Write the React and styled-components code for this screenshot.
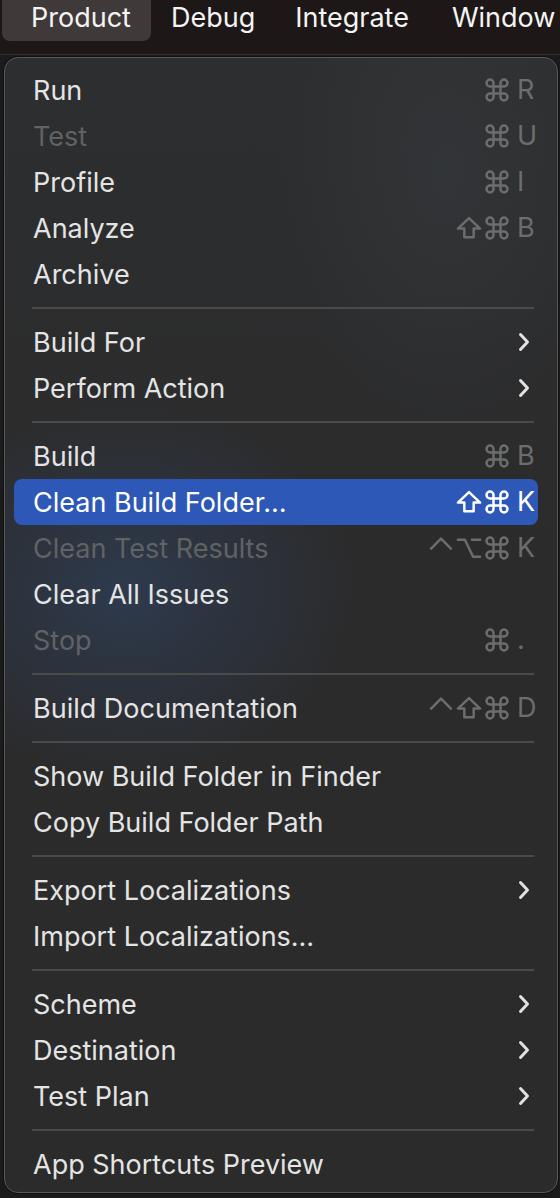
import React from 'react';
import styled, { createGlobalStyle } from 'styled-components';

const GlobalStyle = createGlobalStyle`
  html, body {
    margin: 0;
    padding: 0;
    background: #1b1b1c;
  }
  body {
    font-family: "Inter", "Noto Sans", "Liberation Sans", sans-serif;
    -webkit-font-smoothing: antialiased;
  }
`;

const Page = styled.div`
  width: 560px;
  height: 1198px;
  overflow: hidden;
  background: #1b1b1c;
`;

const MenuBar = styled.div`
  height: 55px;
  display: flex;
  align-items: flex-start;
  background: #1d1817;
  border-bottom: 1px solid #2f2d2d;
  box-sizing: border-box;
  padding-left: 2px;
`;

const BarItem = styled.div`
  height: 41px;
  box-sizing: border-box;
  padding: 0 ${(p) => p.$pad}px 7px ${(p) => p.$padLeft}px;
  display: flex;
  align-items: center;
  font-size: 27px;
  color: #f4f4f4;
  border-radius: 0 0 8px 8px;
  background: ${(p) => (p.$open ? '#3f3a39' : 'transparent')};
  white-space: nowrap;
`;

const Panel = styled.div`
  margin: 2px 0 0 4px;
  width: 554px;
  box-sizing: border-box;
  border: 1px solid #58585a;
  border-radius: 14px;
  padding: 9px 0 5px;
  background:
    radial-gradient(ellipse 55% 22% at 22% 47%, rgba(48, 70, 104, 0.55), transparent 75%),
    radial-gradient(ellipse 40% 30% at 80% 10%, rgba(60, 66, 72, 0.35), transparent 75%),
    linear-gradient(180deg, #2d2e2f 0%, #2b2b2c 50%, #2b2b2b 100%);
  box-shadow: 0 0 0 1px #111;
`;

const Row = styled.div`
  height: 46px;
  margin: 0 19px 0 9px;
  padding: 0 2px 0 19px;
  display: flex;
  align-items: center;
  border-radius: 8px;
  font-size: 27px;
  background: ${(p) => (p.$active ? '#2d58b8' : 'transparent')};
  color: ${(p) => (p.$active ? '#ffffff' : p.$disabled ? '#616263' : '#e4e4e4')};
`;

const Label = styled.span`
  flex: 1;
  white-space: nowrap;
`;

const Separator = styled.div`
  height: 2px;
  margin: 10px 23px 10px 27px;
  background: #4a4a4b;
`;

const Shortcut = styled.div`
  display: flex;
  align-items: center;
  color: ${(p) => (p.$active ? '#ffffff' : '#6c6d6e')};
`;

const ModCell = styled.span`
  width: 28px;
  height: 28px;
  display: flex;
  align-items: center;
  justify-content: center;
`;

const KeyCell = styled.span`
  width: 19px;
  margin-left: 6px;
  font-size: 27px;
  line-height: 28px;
`;

const Chevron = styled.span`
  display: flex;
  align-items: center;
  margin-right: 6px;
  color: #e2e2e2;
`;

const Glyph = ({ name }) => {
  const common = {
    fill: 'none',
    stroke: 'currentColor',
    strokeWidth: 2.1,
    strokeLinecap: 'round',
    strokeLinejoin: 'round',
  };
  if (name === 'cmd') {
    return (
      <svg width="28" height="28" viewBox="0 0 24 24" {...common}>
        <path d="M15 6v12a3 3 0 1 0 3-3H6a3 3 0 1 0 3 3V6a3 3 0 1 0-3 3h12a3 3 0 1 0-3-3" />
      </svg>
    );
  }
  if (name === 'shift') {
    return (
      <svg width="28" height="28" viewBox="0 0 24 24" {...common}>
        <path d="M12 3.5 L21.5 12.5 H16 V20 H8 V12.5 H2.5 Z" />
      </svg>
    );
  }
  if (name === 'opt') {
    return (
      <svg width="28" height="28" viewBox="0 0 24 24" {...common}>
        <path d="M2.5 5h6l7 14.5h6" />
        <path d="M14.5 5h7" />
      </svg>
    );
  }
  if (name === 'ctrl') {
    return (
      <svg width="28" height="28" viewBox="0 0 24 24" {...common}>
        <path d="M3.5 12.5 L12 4 L20.5 12.5" />
      </svg>
    );
  }
  return null;
};

const SubmenuArrow = () => (
  <Chevron>
    <svg width="12" height="20" viewBox="0 0 12 20" fill="none" stroke="currentColor" strokeWidth="3" strokeLinecap="round" strokeLinejoin="round">
      <path d="M2.5 2.5 L9.5 10 L2.5 17.5" />
    </svg>
  </Chevron>
);

const sections = [
  [
    { label: 'Run', keys: ['cmd', 'R'] },
    { label: 'Test', keys: ['cmd', 'U'], disabled: true },
    { label: 'Profile', keys: ['cmd', 'I'] },
    { label: 'Analyze', keys: ['shift', 'cmd', 'B'] },
    { label: 'Archive' },
  ],
  [
    { label: 'Build For', submenu: true },
    { label: 'Perform Action', submenu: true },
  ],
  [
    { label: 'Build', keys: ['cmd', 'B'] },
    { label: 'Clean Build Folder…', keys: ['shift', 'cmd', 'K'], active: true },
    { label: 'Clean Test Results', keys: ['ctrl', 'opt', 'cmd', 'K'], disabled: true },
    { label: 'Clear All Issues' },
    { label: 'Stop', keys: ['cmd', '.'], disabled: true },
  ],
  [{ label: 'Build Documentation', keys: ['ctrl', 'shift', 'cmd', 'D'] }],
  [
    { label: 'Show Build Folder in Finder' },
    { label: 'Copy Build Folder Path' },
  ],
  [
    { label: 'Export Localizations', submenu: true },
    { label: 'Import Localizations…' },
  ],
  [
    { label: 'Scheme', submenu: true },
    { label: 'Destination', submenu: true },
    { label: 'Test Plan', submenu: true },
  ],
  [{ label: 'App Shortcuts Preview' }],
];

const MODS = ['cmd', 'shift', 'opt', 'ctrl'];

const MenuRow = ({ item }) => (
  <Row $active={item.active} $disabled={item.disabled}>
    <Label>{item.label}</Label>
    {item.keys && (
      <Shortcut $active={item.active}>
        {item.keys.map((k) =>
          MODS.includes(k) ? (
            <ModCell key={k}>
              <Glyph name={k} />
            </ModCell>
          ) : (
            <KeyCell key={k}>{k}</KeyCell>
          )
        )}
      </Shortcut>
    )}
    {item.submenu && <SubmenuArrow />}
  </Row>
);

export default function App() {
  return (
    <Page>
      <GlobalStyle />
      <MenuBar>
        <BarItem $open $padLeft={29} $pad={20}>Product</BarItem>
        <BarItem $padLeft={20} $pad={20}>Debug</BarItem>
        <BarItem $padLeft={20} $pad={22}>Integrate</BarItem>
        <BarItem $padLeft={21} $pad={0}>Window</BarItem>
      </MenuBar>
      <Panel>
        {sections.map((section, i) => (
          <React.Fragment key={i}>
            {i > 0 && <Separator />}
            {section.map((item) => (
              <MenuRow key={item.label} item={item} />
            ))}
          </React.Fragment>
        ))}
      </Panel>
    </Page>
  );
}
